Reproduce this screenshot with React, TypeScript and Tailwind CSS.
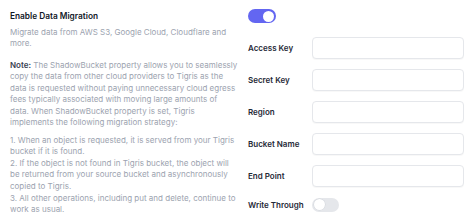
import { useState } from 'react';

export default function App() {
  const [migrate, setMigrate] = useState(true);
  const [writeThrough, setWriteThrough] = useState(false);

  return (
    <div className="flex w-[474px] h-[221px] bg-white overflow-hidden font-['Inter',sans-serif]">
      {/* Left: description */}
      <div className="w-[248px] flex-shrink-0 pl-[10px] pr-[3px] pt-[9px]">
        <h2 className="text-[8.3px] leading-[14px] font-semibold text-[#111827]">
          Enable Data Migration
        </h2>
        <p className="mt-[4px] text-[8px] leading-[11px] text-[#9ca3af]">
          Migrate data from AWS S3, Google Cloud, Cloudflare and
          <br />
          more.
        </p>
        <p className="mt-[10.5px] text-[8px] leading-[11.6px] text-[#9ca3af]">
          <span className="font-semibold text-[#374151]">Note:</span> The ShadowBucket property
          allows you to seamlessly
          <br />
          copy the data from other cloud providers to Tigris as the
          <br />
          data is requested without paying unnecessary cloud egress
          <br />
          fees typically associated with moving large amounts of
          <br />
          data. When ShadowBucket property is set, Tigris
          <br />
          implements the following migration strategy:
        </p>
        <p className="mt-[5.5px] text-[8px] leading-[11.6px] text-[#9ca3af]">
          1. When an object is requested, it is served from your Tigris
          <br />
          bucket if it is found.
          <br />
          2. If the object is not found in Tigris bucket, the object will
          <br />
          be returned from your source bucket and asynchronously
          <br />
          copied to Tigris.
          <br />
          3. All other operations, including put and delete, continue to
          <br />
          work as usual.
        </p>
      </div>

      {/* Right: form */}
      <div className="flex-1 pr-[10px] pt-[9px]">
        <Toggle on={migrate} onClick={() => setMigrate(!migrate)} />
        <div className="mt-[14px] flex flex-col gap-[10.5px]">
          <Field label="Access Key" />
          <Field label="Secret Key" />
          <Field label="Region" />
          <Field label="Bucket Name" />
          <Field label="End Point" />
          <div className="flex items-center h-[15px]">
            <span className="w-[64px] flex-shrink-0 text-[8px] font-semibold text-[#1f2937]">
              Write Through
            </span>
            <Toggle on={writeThrough} onClick={() => setWriteThrough(!writeThrough)} />
          </div>
        </div>
      </div>
    </div>
  );
}

function Field({ label }: { label: string }) {
  return (
    <div className="flex items-center">
      <span className="w-[64px] flex-shrink-0 text-[8px] font-semibold text-[#1f2937]">
        {label}
      </span>
      <input className="w-[152px] h-[21.5px] rounded-[4px] border border-[#e5e7eb] bg-white shadow-[0_1px_1px_rgba(0,0,0,0.03)] outline-none px-2 text-[8px]" />
    </div>
  );
}

function Toggle({ on, onClick }: { on: boolean; onClick: () => void }) {
  return (
    <button
      onClick={onClick}
      className={
        on
          ? 'relative block w-[28px] h-[14px] rounded-full bg-[#6366f1]'
          : 'relative block w-[27px] h-[14px] rounded-full bg-[#e5e7eb]'
      }
    >
      <span
        className={
          on
            ? 'absolute top-[1.5px] left-[15px] w-[11px] h-[11px] rounded-full bg-white'
            : 'absolute top-[1.5px] left-[1.5px] w-[11px] h-[11px] rounded-full bg-white shadow-[0_0_0_0.5px_#d1d5db]'
        }
      />
    </button>
  );
}
